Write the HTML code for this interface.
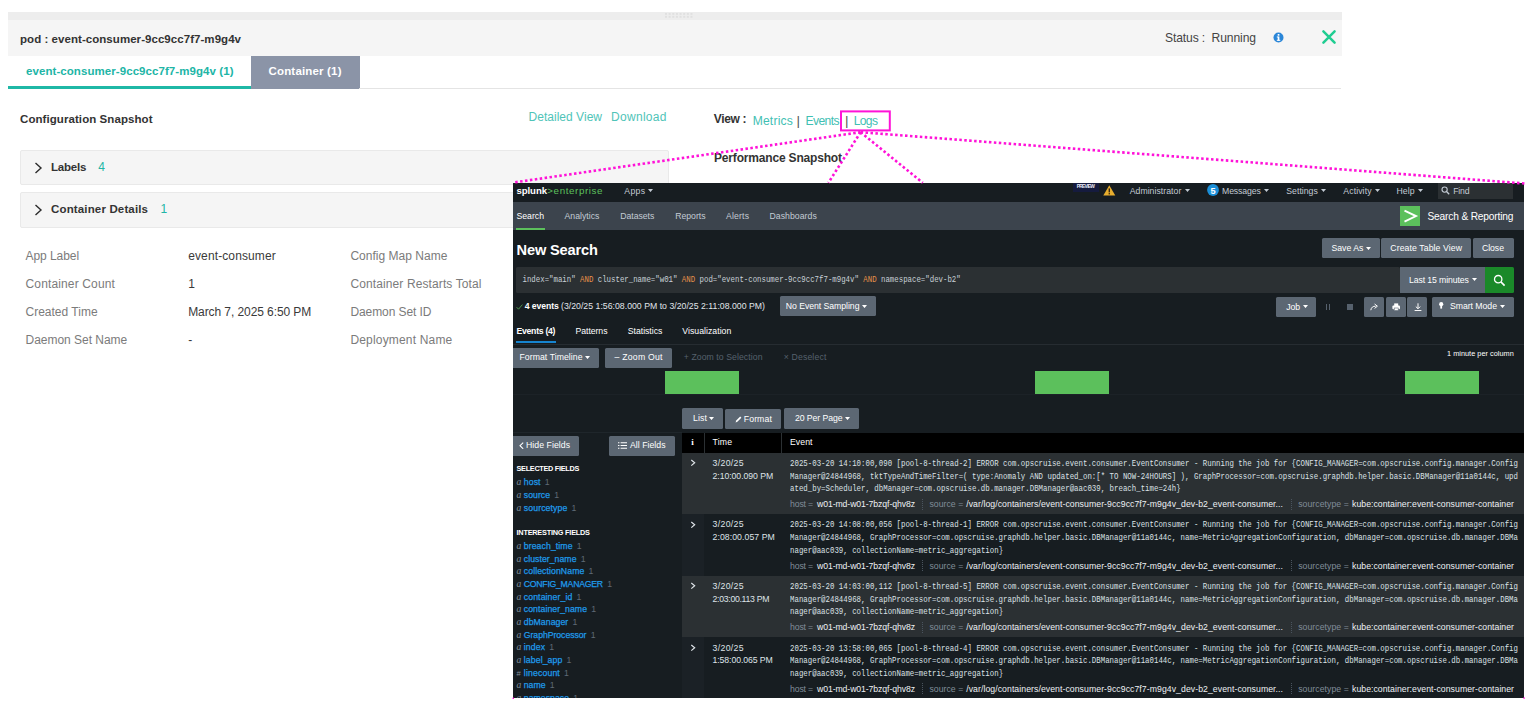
<!DOCTYPE html><html><head><meta charset="utf-8"><title>pod</title><style>

html,body{margin:0;padding:0;background:#fff;}
body{width:1536px;height:709px;position:relative;overflow:hidden;font-family:"Liberation Sans",sans-serif;}
.r{position:absolute;display:block;}
.t{position:absolute;white-space:nowrap;line-height:1;margin:0;padding:0;}
.t b{font-weight:400;color:#e8924a;}

</style></head><body>
<div class="r" style="left:8px;top:12px;width:1333.5px;height:8px;background:#ededed;"></div>
<div class="r" style="left:8px;top:20px;width:1333.5px;height:35.5px;background:#f5f5f5;"></div>
<div class="r" style="left:8px;top:86px;width:242.5px;height:2.5px;background:#1fb8a6;"></div>
<div class="r" style="left:250.5px;top:55.5px;width:109px;height:33px;background:#8b94a7;"></div>
<div class="r" style="left:359px;top:88px;width:982px;height:1px;background:#e4e4e4;"></div>
<div class="r" style="left:20px;top:150px;width:649px;height:35px;background:#f5f5f5;border-radius:2px;border:1px solid #e9e9e9;box-sizing:border-box;"></div>
<div class="r" style="left:20px;top:192px;width:649px;height:36px;background:#f5f5f5;border-radius:2px;border:1px solid #e9e9e9;box-sizing:border-box;"></div>
<div class="r" style="left:513px;top:183px;width:1011px;height:515px;background:#171d21;"></div>
<div class="r" style="left:513px;top:202px;width:1011px;height:28px;background:#3c444d;"></div>
<div class="r" style="left:1072.8px;top:183px;width:26.6px;height:8.7px;background:#151b3e;"></div>
<div class="r" style="left:1438px;top:183px;width:75px;height:15.8px;background:#2b3033;"></div>
<div class="r" style="left:516px;top:228px;width:28.5px;height:2px;background:#5cc05c;"></div>
<div class="r" style="left:1399.5px;top:205.8px;width:20.5px;height:20.3px;background:#5cc05c;"></div>
<div class="r" style="left:1322px;top:237.8px;width:57.5px;height:20.19999999999999px;background:#5c6773;border-radius:1.5px;"></div>
<div class="r" style="left:1381px;top:237.8px;width:90px;height:20.19999999999999px;background:#5c6773;border-radius:1.5px;"></div>
<div class="r" style="left:1472.8px;top:237.8px;width:41.0px;height:20.19999999999999px;background:#5c6773;border-radius:1.5px;"></div>
<div class="r" style="left:516px;top:267.3px;width:884px;height:25.3px;background:#2b3033;border-radius:1.5px;"></div>
<div class="r" style="left:1400px;top:267.3px;width:84.5px;height:25.3px;background:#5c6773;"></div>
<div class="r" style="left:1484.5px;top:267.3px;width:29.3px;height:25.3px;background:#1a8929;border-radius:0 1.5px 1.5px 0;"></div>
<div class="r" style="left:779.5px;top:296px;width:96.5px;height:20px;background:#5c6773;border-radius:1.5px;"></div>
<div class="r" style="left:1276.4px;top:296.5px;width:39.799999999999955px;height:20.100000000000023px;background:#5c6773;border-radius:1.5px;"></div>
<div class="r" style="left:1325.8px;top:304px;width:1.3px;height:5.6px;background:#56616d;"></div>
<div class="r" style="left:1328.7px;top:304px;width:1.3px;height:5.6px;background:#56616d;"></div>
<div class="r" style="left:1347px;top:304px;width:6px;height:5.6px;background:#56616d;"></div>
<div class="r" style="left:1363.9px;top:296.5px;width:20.399999999999864px;height:20.100000000000023px;background:#5c6773;border-radius:1.5px;"></div>
<div class="r" style="left:1385.6px;top:296.5px;width:20.300000000000182px;height:20.100000000000023px;background:#5c6773;border-radius:1.5px;"></div>
<div class="r" style="left:1407.4px;top:296.5px;width:20.09999999999991px;height:20.100000000000023px;background:#5c6773;border-radius:1.5px;"></div>
<div class="r" style="left:1432px;top:296.5px;width:81.79999999999995px;height:20.100000000000023px;background:#5c6773;border-radius:1.5px;"></div>
<div class="r" style="left:516px;top:341.3px;width:39.8px;height:2.1px;background:#1684cf;"></div>
<div class="r" style="left:513px;top:343.6px;width:1011px;height:1px;background:#262c31;"></div>
<div class="r" style="left:513px;top:347.5px;width:85.8px;height:20px;background:#5c6773;border-radius:0 1.5px 1.5px 0;"></div>
<div class="r" style="left:605.2px;top:347.5px;width:66.59999999999991px;height:20.100000000000023px;background:#5c6773;border-radius:1.5px;"></div>
<div class="r" style="left:664.5px;top:371px;width:74.1px;height:22.6px;background:#5cc05c;"></div>
<div class="r" style="left:1034.8px;top:371px;width:74.1px;height:22.6px;background:#5cc05c;"></div>
<div class="r" style="left:1404.8px;top:371px;width:74.1px;height:22.6px;background:#5cc05c;"></div>
<div class="r" style="left:513px;top:393.6px;width:1011px;height:0.8px;background:#1c2227;"></div>
<div class="r" style="left:682px;top:408.4px;width:41px;height:20.200000000000045px;background:#5c6773;border-radius:1.5px;"></div>
<div class="r" style="left:725px;top:409.3px;width:55.799999999999955px;height:20.099999999999966px;background:#5c6773;border-radius:1.5px;"></div>
<div class="r" style="left:783.5px;top:408.4px;width:75.5px;height:20.200000000000045px;background:#5c6773;border-radius:1.5px;"></div>
<div class="r" style="left:682px;top:432.5px;width:842px;height:20.2px;background:#000000;"></div>
<div class="r" style="left:704.3px;top:432.5px;width:0.8px;height:20.2px;background:#2b3033;"></div>
<div class="r" style="left:781.3px;top:432.5px;width:0.8px;height:20.2px;background:#2b3033;"></div>
<div class="r" style="left:513px;top:432.3px;width:169px;height:0.8px;background:#1f262b;"></div>
<div class="r" style="left:513px;top:436px;width:66.3px;height:19.8px;background:#5c6773;border-radius:0 1.5px 1.5px 0;"></div>
<div class="r" style="left:609px;top:436px;width:66px;height:19.80000000000001px;background:#5c6773;border-radius:1.5px;"></div>
<div class="r" style="left:682px;top:452.7px;width:842px;height:61.55000000000001px;background:#2b3033;"></div>
<div class="r" style="left:682px;top:514.25px;width:842px;height:61.549999999999955px;background:#171d21;"></div>
<div class="r" style="left:682px;top:514.25px;width:22.3px;height:61.549999999999955px;background:#1b2126;"></div>
<div class="r" style="left:682px;top:575.8px;width:842px;height:61.55000000000007px;background:#2b3033;"></div>
<div class="r" style="left:682px;top:637.35px;width:842px;height:60.64999999999998px;background:#171d21;"></div>
<div class="r" style="left:682px;top:637.35px;width:22.3px;height:60.64999999999998px;background:#1b2126;"></div>
<svg class="r" style="left:664.5px;top:13.2px" width="30" height="6"><rect x="0.00" y="0.0" width="2" height="1.9" fill="#e0e0e0"/><rect x="0.00" y="2.9" width="2" height="1.9" fill="#e0e0e0"/><rect x="3.64" y="0.0" width="2" height="1.9" fill="#e0e0e0"/><rect x="3.64" y="2.9" width="2" height="1.9" fill="#e0e0e0"/><rect x="7.28" y="0.0" width="2" height="1.9" fill="#e0e0e0"/><rect x="7.28" y="2.9" width="2" height="1.9" fill="#e0e0e0"/><rect x="10.92" y="0.0" width="2" height="1.9" fill="#e0e0e0"/><rect x="10.92" y="2.9" width="2" height="1.9" fill="#e0e0e0"/><rect x="14.56" y="0.0" width="2" height="1.9" fill="#e0e0e0"/><rect x="14.56" y="2.9" width="2" height="1.9" fill="#e0e0e0"/><rect x="18.20" y="0.0" width="2" height="1.9" fill="#e0e0e0"/><rect x="18.20" y="2.9" width="2" height="1.9" fill="#e0e0e0"/><rect x="21.84" y="0.0" width="2" height="1.9" fill="#e0e0e0"/><rect x="21.84" y="2.9" width="2" height="1.9" fill="#e0e0e0"/><rect x="25.48" y="0.0" width="2" height="1.9" fill="#e0e0e0"/><rect x="25.48" y="2.9" width="2" height="1.9" fill="#e0e0e0"/></svg>
<svg class="r" style="left:1273px;top:32.3px" width="11" height="11" viewBox="0 0 11 11"><circle cx="5.5" cy="5.5" r="5" fill="#2a86d8"/><rect x="4.7" y="2" width="1.7" height="1.7" fill="#fff"/><rect x="4.7" y="4.5" width="1.7" height="4.2" fill="#fff"/><rect x="3.8" y="4.5" width="1.5" height="1" fill="#fff"/><rect x="3.8" y="7.8" width="3.5" height="1" fill="#fff"/></svg>
<svg class="r" style="left:1321px;top:29px" width="16" height="16" viewBox="0 0 16 16"><path d="M2.4 2.4 L13.6 13.6 M13.6 2.4 L2.4 13.6" stroke="#1fcd91" stroke-width="2.5" stroke-linecap="round" fill="none"/></svg>
<svg class="r" style="left:33px;top:160.5px" width="12" height="14" viewBox="0 0 12 14"><path d="M2.5 2 L8 7 L2.5 12" stroke="#2b2b2b" stroke-width="1.4" fill="none"/></svg>
<svg class="r" style="left:33px;top:202.5px" width="12" height="14" viewBox="0 0 12 14"><path d="M2.5 2 L8 7 L2.5 12" stroke="#2b2b2b" stroke-width="1.4" fill="none"/></svg>
<svg class="r" style="left:647.6px;top:189.3px" width="5" height="3.2" viewBox="0 0 10 6"><path d="M0 0 L10 0 L5 6 Z" fill="#c3cbd4"/></svg>
<svg class="r" style="left:1103px;top:185.4px" width="12.6" height="10.8" viewBox="0 0 12.6 10.8"><path d="M6.3 0.3 L12.3 10.4 L0.3 10.4 Z" fill="#e8ae2e"/><rect x="5.6" y="3.4" width="1.4" height="4" fill="#3a2a10"/><rect x="5.6" y="8.1" width="1.4" height="1.3" fill="#3a2a10"/></svg>
<svg class="r" style="left:1185px;top:189.4px" width="5" height="3.2" viewBox="0 0 10 6"><path d="M0 0 L10 0 L5 6 Z" fill="#c3cbd4"/></svg>
<svg class="r" style="left:1207px;top:184.3px" width="12" height="12" viewBox="0 0 12 12"><circle cx="6" cy="6" r="5.9" fill="#1a8fd8"/></svg>
<svg class="r" style="left:1264px;top:189.4px" width="5" height="3.2" viewBox="0 0 10 6"><path d="M0 0 L10 0 L5 6 Z" fill="#c3cbd4"/></svg>
<svg class="r" style="left:1321.3px;top:189.4px" width="5" height="3.2" viewBox="0 0 10 6"><path d="M0 0 L10 0 L5 6 Z" fill="#c3cbd4"/></svg>
<svg class="r" style="left:1374.5px;top:189.4px" width="5" height="3.2" viewBox="0 0 10 6"><path d="M0 0 L10 0 L5 6 Z" fill="#c3cbd4"/></svg>
<svg class="r" style="left:1417.8px;top:189.4px" width="5" height="3.2" viewBox="0 0 10 6"><path d="M0 0 L10 0 L5 6 Z" fill="#c3cbd4"/></svg>
<svg class="r" style="left:1441px;top:186.3px" width="9" height="9" viewBox="0 0 9 9"><circle cx="3.6" cy="3.6" r="2.6" stroke="#c3cbd4" stroke-width="1.1" fill="none"/><path d="M5.5 5.5 L8.2 8.2" stroke="#c3cbd4" stroke-width="1.3"/></svg>
<svg class="r" style="left:1399.5px;top:205.8px" width="20.5" height="20.3" viewBox="0 0 20.5 20.3"><path d="M4.5 4.6 L16 10.1 L4.5 15.7" stroke="#fff" stroke-width="1.9" fill="none"/></svg>
<svg class="r" style="left:1366.2px;top:246.6px" width="5" height="3.2" viewBox="0 0 10 6"><path d="M0 0 L10 0 L5 6 Z" fill="#ffffff"/></svg>
<svg class="r" style="left:1471.5px;top:278.4px" width="5" height="3.2" viewBox="0 0 10 6"><path d="M0 0 L10 0 L5 6 Z" fill="#ffffff"/></svg>
<svg class="r" style="left:1492.5px;top:274px" width="13" height="13" viewBox="0 0 13 13"><circle cx="5.2" cy="5.2" r="3.7" stroke="#fff" stroke-width="1.3" fill="none"/><path d="M7.9 7.9 L11.6 11.6" stroke="#fff" stroke-width="1.6"/></svg>
<svg class="r" style="left:516.3px;top:303.5px" width="7" height="6" viewBox="0 0 7 6"><path d="M0.6 3.2 L2.5 5.2 L6.4 0.6" stroke="#53a051" stroke-width="0.9" fill="none"/></svg>
<svg class="r" style="left:862.3px;top:304.6px" width="5" height="3.2" viewBox="0 0 10 6"><path d="M0 0 L10 0 L5 6 Z" fill="#ffffff"/></svg>
<svg class="r" style="left:1303.2px;top:305.3px" width="5" height="3.2" viewBox="0 0 10 6"><path d="M0 0 L10 0 L5 6 Z" fill="#ffffff"/></svg>
<svg class="r" style="left:1370px;top:302.5px" width="8" height="8" viewBox="0 0 8 8"><path d="M0.8 7.2 C1.2 4.3 3 3.2 5.6 3.2" stroke="#fff" stroke-width="1" fill="none"/><path d="M4.6 1 L7.4 3.2 L4.6 5.4" stroke="#fff" stroke-width="1" fill="none"/></svg>
<svg class="r" style="left:1391.6px;top:302.6px" width="8.4" height="8" viewBox="0 0 8.4 8"><rect x="2.2" y="0.4" width="4" height="2.6" fill="#fff"/><rect x="0.4" y="2.6" width="7.6" height="3.6" rx="1" fill="#fff"/><rect x="2.2" y="5" width="4" height="2.6" fill="#fff" stroke="#5c6773" stroke-width="0.6"/></svg>
<svg class="r" style="left:1413.6px;top:302.6px" width="8" height="8.4" viewBox="0 0 8 8.4"><path d="M4 0.3 L4 5.4 M1.8 3.6 L4 5.8 L6.2 3.6" stroke="#fff" stroke-width="1" fill="none"/><path d="M0.6 7.6 L7.4 7.6" stroke="#fff" stroke-width="1.1"/></svg>
<svg class="r" style="left:1439.3px;top:302.3px" width="4.4" height="7.4" viewBox="0 0 4.4 7.4"><circle cx="2.2" cy="2.2" r="2.1" fill="#fff"/><rect x="1.3" y="4" width="1.8" height="2.6" fill="#fff"/></svg>
<svg class="r" style="left:1500.2px;top:304.6px" width="5" height="3.2" viewBox="0 0 10 6"><path d="M0 0 L10 0 L5 6 Z" fill="#ffffff"/></svg>
<svg class="r" style="left:585.2px;top:355.8px" width="5" height="3.2" viewBox="0 0 10 6"><path d="M0 0 L10 0 L5 6 Z" fill="#ffffff"/></svg>
<svg class="r" style="left:709.3px;top:417.1px" width="5" height="3.2" viewBox="0 0 10 6"><path d="M0 0 L10 0 L5 6 Z" fill="#ffffff"/></svg>
<svg class="r" style="left:734.5px;top:415.6px" width="7" height="7" viewBox="0 0 7 7"><path d="M0.6 6.4 L1.2 4.6 L5.2 0.6 L6.4 1.8 L2.4 5.8 Z" fill="#fff"/></svg>
<svg class="r" style="left:845.3px;top:417.1px" width="5" height="3.2" viewBox="0 0 10 6"><path d="M0 0 L10 0 L5 6 Z" fill="#ffffff"/></svg>
<svg class="r" style="left:519.3px;top:441.6px" width="5" height="7.4" viewBox="0 0 5 7.4"><path d="M4.2 0.6 L1 3.7 L4.2 6.8" stroke="#fff" stroke-width="1.1" fill="none"/></svg>
<svg class="r" style="left:618.3px;top:442px" width="9" height="7" viewBox="0 0 9 7"><path d="M0 0.8 H1.4 M2.6 0.8 H9 M0 3.5 H1.4 M2.6 3.5 H9 M0 6.2 H1.4 M2.6 6.2 H9" stroke="#fff" stroke-width="1.1"/></svg>
<svg class="r" style="left:690px;top:459.3px" width="6.4" height="7.6" viewBox="0 0 6.4 7.6"><path d="M1.3 1 L4.7 3.8 L1.3 6.6" stroke="#e1e6eb" stroke-width="1.15" fill="none"/></svg>
<div class="r" style="left:922.3px;top:498.5px;width:0;height:11px;border-left:0.8px dotted #4a545e;"></div>
<div class="r" style="left:1291px;top:498.5px;width:0;height:11px;border-left:0.8px dotted #4a545e;"></div>
<svg class="r" style="left:690px;top:520.85px" width="6.4" height="7.6" viewBox="0 0 6.4 7.6"><path d="M1.3 1 L4.7 3.8 L1.3 6.6" stroke="#e1e6eb" stroke-width="1.15" fill="none"/></svg>
<div class="r" style="left:922.3px;top:560.05px;width:0;height:11px;border-left:0.8px dotted #4a545e;"></div>
<div class="r" style="left:1291px;top:560.05px;width:0;height:11px;border-left:0.8px dotted #4a545e;"></div>
<svg class="r" style="left:690px;top:582.4px" width="6.4" height="7.6" viewBox="0 0 6.4 7.6"><path d="M1.3 1 L4.7 3.8 L1.3 6.6" stroke="#e1e6eb" stroke-width="1.15" fill="none"/></svg>
<div class="r" style="left:922.3px;top:621.5999999999999px;width:0;height:11px;border-left:0.8px dotted #4a545e;"></div>
<div class="r" style="left:1291px;top:621.5999999999999px;width:0;height:11px;border-left:0.8px dotted #4a545e;"></div>
<svg class="r" style="left:690px;top:643.95px" width="6.4" height="7.6" viewBox="0 0 6.4 7.6"><path d="M1.3 1 L4.7 3.8 L1.3 6.6" stroke="#e1e6eb" stroke-width="1.15" fill="none"/></svg>
<div class="r" style="left:922.3px;top:683.15px;width:0;height:11px;border-left:0.8px dotted #4a545e;"></div>
<div class="r" style="left:1291px;top:683.15px;width:0;height:11px;border-left:0.8px dotted #4a545e;"></div>
<div class="r" style="left:513px;top:698px;width:1011px;height:11px;background:#fff;z-index:5"></div>
<svg class="r" style="left:0;top:0;z-index:6" width="1536" height="709"><g stroke="#ff12d8" stroke-width="2.6" stroke-dasharray="2.5 2.45" fill="none"><path d="M860.6 132.2 L513.6 182.5"/><path d="M860.6 132.2 L828.4 182.8"/><path d="M860.6 132.2 L922.8 182.8"/><path d="M860.6 132.2 L1524.6 183.5"/></g><rect x="841" y="111.4" width="48.8" height="19" fill="none" stroke="#ff12d8" stroke-width="2"/><rect x="512.6" y="697.6" width="1.4" height="1.4" fill="#ff12d8"/><rect x="1523.4" y="697.4" width="1.4" height="1.4" fill="#ff12d8"/></svg>
<div class="t" id="t0" style="left:20.00px;top:34.00px;font-size:11.5px;color:#333333;font-weight:700;letter-spacing:0.051px;">pod : event-consumer-9cc9cc7f7-m9g4v</div>
<div class="t" id="t1" style="left:1165.00px;top:32.01px;font-size:12.1px;color:#444444;letter-spacing:-0.111px;white-space:pre;">Status :  Running</div>
<div class="t" id="t2" style="left:26.00px;top:66.00px;font-size:11.5px;color:#21b5a6;font-weight:700;letter-spacing:0.070px;">event-consumer-9cc9cc7f7-m9g4v (1)</div>
<div class="t" id="t3" style="left:268.50px;top:66.00px;font-size:11.5px;color:#ffffff;font-weight:700;letter-spacing:0.173px;">Container (1)</div>
<div class="t" id="t4" style="left:20.00px;top:114.00px;font-size:11.5px;color:#333333;font-weight:700;letter-spacing:0.073px;">Configuration Snapshot</div>
<div class="t" id="t5" style="left:528.50px;top:111.01px;font-size:12px;color:#4fc4b8;letter-spacing:0.029px;">Detailed View</div>
<div class="t" id="t6" style="left:611.00px;top:111.01px;font-size:12px;color:#4fc4b8;letter-spacing:0.304px;">Download</div>
<div class="t" id="t7" style="left:713.70px;top:113.01px;font-size:12px;color:#333333;font-weight:700;letter-spacing:-0.334px;">View :</div>
<div class="t" id="t8" style="left:752.70px;top:115.01px;font-size:12.1px;color:#3fc0b3;letter-spacing:0.189px;">Metrics</div>
<div class="t" id="t9" style="left:796.60px;top:114.02px;font-size:13.5px;color:#555555;">|</div>
<div class="t" id="t10" style="left:805.50px;top:115.01px;font-size:12.1px;color:#3fc0b3;letter-spacing:-0.577px;">Events</div>
<div class="t" id="t11" style="left:844.90px;top:114.02px;font-size:13.5px;color:#555555;">|</div>
<div class="t" id="t12" style="left:853.70px;top:115.01px;font-size:12.1px;color:#3fc0b3;letter-spacing:-0.645px;">Logs</div>
<div class="t" id="t13" style="left:714.00px;top:152.02px;font-size:12px;color:#333333;font-weight:700;letter-spacing:-0.178px;">Performance Snapshot</div>
<div class="t" id="t14" style="left:51.00px;top:162.00px;font-size:11.5px;color:#333333;font-weight:700;letter-spacing:-0.228px;">Labels</div>
<div class="t" id="t15" style="left:98.30px;top:161.02px;font-size:12px;color:#21b5a6;">4</div>
<div class="t" id="t16" style="left:51.00px;top:204.00px;font-size:11.5px;color:#333333;font-weight:700;letter-spacing:0.151px;">Container Details</div>
<div class="t" id="t17" style="left:160.50px;top:203.02px;font-size:12px;color:#21b5a6;">1</div>
<div class="t" id="t18" style="left:25.50px;top:250.01px;font-size:12px;color:#7b7b7b;letter-spacing:-0.056px;">App Label</div>
<div class="t" id="t19" style="left:188.20px;top:250.01px;font-size:12px;color:#3a3a3a;letter-spacing:0.119px;">event-consumer</div>
<div class="t" id="t20" style="left:350.40px;top:250.01px;font-size:12px;color:#7b7b7b;letter-spacing:0.020px;">Config Map Name</div>
<div class="t" id="t21" style="left:25.50px;top:278.00px;font-size:12px;color:#7b7b7b;letter-spacing:0.144px;">Container Count</div>
<div class="t" id="t22" style="left:188.20px;top:278.00px;font-size:12px;color:#3a3a3a;">1</div>
<div class="t" id="t23" style="left:350.40px;top:278.00px;font-size:12px;color:#7b7b7b;letter-spacing:0.112px;">Container Restarts Total</div>
<div class="t" id="t24" style="left:25.50px;top:306.01px;font-size:12px;color:#7b7b7b;letter-spacing:0.006px;">Created Time</div>
<div class="t" id="t25" style="left:188.20px;top:306.01px;font-size:12px;color:#3a3a3a;letter-spacing:-0.082px;">March 7, 2025 6:50 PM</div>
<div class="t" id="t26" style="left:350.40px;top:306.01px;font-size:12px;color:#7b7b7b;letter-spacing:-0.079px;">Daemon Set ID</div>
<div class="t" id="t27" style="left:25.50px;top:334.00px;font-size:12px;color:#7b7b7b;letter-spacing:-0.025px;">Daemon Set Name</div>
<div class="t" id="t28" style="left:188.20px;top:334.00px;font-size:12px;color:#3a3a3a;">-</div>
<div class="t" id="t29" style="left:350.40px;top:334.00px;font-size:12px;color:#7b7b7b;letter-spacing:0.180px;">Deployment Name</div>
<div class="t" id="t30" style="left:516.50px;top:186.02px;font-size:9.6px;color:#ffffff;font-weight:700;letter-spacing:-0.084px;">splunk</div>
<div class="t" id="t31" style="left:547.30px;top:186.02px;font-size:9.6px;color:#5cc05c;">&gt;</div>
<div class="t" id="t32" style="left:553.60px;top:186.00px;font-size:9.8px;color:#5cc05c;letter-spacing:0.591px;">enterprise</div>
<div class="t" id="t33" style="left:624.30px;top:187.01px;font-size:8.7px;color:#c3cbd4;letter-spacing:0.296px;">Apps</div>
<div class="t" id="t34" style="left:1076.70px;top:185.01px;font-size:4.9px;color:#e8ebf5;font-weight:700;letter-spacing:-0.710px;">PREVIEW</div>
<div class="t" id="t35" style="left:1129.70px;top:187.00px;font-size:8.7px;color:#c3cbd4;letter-spacing:0.034px;">Administrator</div>
<div class="t" id="t36" style="left:1210.40px;top:187.01px;font-size:9.2px;color:#ffffff;font-weight:700;">5</div>
<div class="t" id="t37" style="left:1222.00px;top:187.00px;font-size:8.7px;color:#c3cbd4;letter-spacing:-0.101px;">Messages</div>
<div class="t" id="t38" style="left:1286.30px;top:187.00px;font-size:8.7px;color:#c3cbd4;letter-spacing:0.016px;">Settings</div>
<div class="t" id="t39" style="left:1343.30px;top:187.00px;font-size:8.7px;color:#c3cbd4;letter-spacing:0.098px;">Activity</div>
<div class="t" id="t40" style="left:1396.50px;top:187.00px;font-size:8.7px;color:#c3cbd4;letter-spacing:0.042px;">Help</div>
<div class="t" id="t41" style="left:1453.20px;top:187.00px;font-size:8.7px;color:#c3cbd4;letter-spacing:-0.202px;">Find</div>
<div class="t" id="t42" style="left:516.50px;top:212.00px;font-size:8.7px;color:#ffffff;letter-spacing:-0.006px;">Search</div>
<div class="t" id="t43" style="left:564.50px;top:212.00px;font-size:8.7px;color:#c3cbd4;letter-spacing:0.017px;">Analytics</div>
<div class="t" id="t44" style="left:620.30px;top:212.00px;font-size:8.7px;color:#c3cbd4;letter-spacing:-0.042px;">Datasets</div>
<div class="t" id="t45" style="left:675.30px;top:212.00px;font-size:8.7px;color:#c3cbd4;letter-spacing:-0.037px;">Reports</div>
<div class="t" id="t46" style="left:726.00px;top:212.00px;font-size:8.7px;color:#c3cbd4;letter-spacing:0.156px;">Alerts</div>
<div class="t" id="t47" style="left:769.50px;top:212.00px;font-size:8.7px;color:#c3cbd4;letter-spacing:0.049px;">Dashboards</div>
<div class="t" id="t48" style="left:1427.50px;top:212.01px;font-size:10.2px;color:#ffffff;letter-spacing:-0.172px;">Search &amp; Reporting</div>
<div class="t" id="t49" style="left:516.50px;top:243.02px;font-size:14.6px;color:#ffffff;font-weight:700;letter-spacing:-0.139px;">New Search</div>
<div class="t" id="t50" style="left:1331.50px;top:244.00px;font-size:8.7px;color:#ffffff;letter-spacing:-0.013px;">Save As</div>
<div class="t" id="t51" style="left:1390.30px;top:244.00px;font-size:8.7px;color:#ffffff;letter-spacing:0.095px;">Create Table View</div>
<div class="t" id="t52" style="left:1482.00px;top:244.00px;font-size:8.7px;color:#ffffff;letter-spacing:-0.055px;">Close</div>
<div class="t" id="t53" style="left:522.50px;top:277.04px;font-size:7.38px;color:#c9d0d7;font-family:'Liberation Mono', monospace;transform:scaleY(1.18);transform-origin:0 4.96px;">index="main" <b>AND</b> cluster_name="w01" <b>AND</b> pod="event-consumer-9cc9cc7f7-m9g4v" <b>AND</b> namespace="dev-b2"</div>
<div class="t" id="t54" style="left:1409.00px;top:276.00px;font-size:8.7px;color:#ffffff;letter-spacing:-0.110px;">Last 15 minutes</div>
<div class="t" id="t55" style="left:524.80px;top:302.00px;font-size:8.7px;color:#ffffff;font-weight:700;letter-spacing:-0.112px;">4 events</div>
<div class="t" id="t56" style="left:561.00px;top:302.00px;font-size:8.7px;color:#e1e6eb;letter-spacing:0.026px;">(3/20/25 1:56:08.000 PM to 3/20/25 2:11:08.000 PM)</div>
<div class="t" id="t57" style="left:785.80px;top:302.00px;font-size:8.7px;color:#ffffff;letter-spacing:-0.042px;">No Event Sampling</div>
<div class="t" id="t58" style="left:1286.30px;top:303.01px;font-size:8.7px;color:#ffffff;letter-spacing:-0.158px;">Job</div>
<div class="t" id="t59" style="left:1450.00px;top:302.00px;font-size:8.7px;color:#ffffff;letter-spacing:-0.036px;">Smart Mode</div>
<div class="t" id="t60" style="left:516.50px;top:327.01px;font-size:8.7px;color:#ffffff;font-weight:700;letter-spacing:-0.281px;">Events (4)</div>
<div class="t" id="t61" style="left:575.50px;top:327.01px;font-size:8.7px;color:#ffffff;letter-spacing:-0.051px;">Patterns</div>
<div class="t" id="t62" style="left:627.80px;top:327.01px;font-size:8.7px;color:#ffffff;letter-spacing:-0.030px;">Statistics</div>
<div class="t" id="t63" style="left:682.30px;top:327.01px;font-size:8.7px;color:#ffffff;letter-spacing:0.031px;">Visualization</div>
<div class="t" id="t64" style="left:519.50px;top:353.01px;font-size:8.7px;color:#ffffff;letter-spacing:0.051px;">Format Timeline</div>
<div class="t" id="t65" style="left:614.50px;top:353.01px;font-size:8.7px;color:#ffffff;letter-spacing:0.236px;">– Zoom Out</div>
<div class="t" id="t66" style="left:683.80px;top:353.01px;font-size:8.7px;color:#56616d;letter-spacing:0.066px;">+ Zoom to Selection</div>
<div class="t" id="t67" style="left:783.80px;top:353.01px;font-size:8.7px;color:#56616d;letter-spacing:0.134px;">× Deselect</div>
<div class="t" id="t68" style="left:1447.00px;top:350.01px;font-size:7.3px;color:#ffffff;letter-spacing:0.037px;">1 minute per column</div>
<div class="t" id="t69" style="left:693.00px;top:414.00px;font-size:8.7px;color:#ffffff;letter-spacing:0.156px;">List</div>
<div class="t" id="t70" style="left:743.80px;top:415.01px;font-size:8.7px;color:#ffffff;letter-spacing:0.097px;">Format</div>
<div class="t" id="t71" style="left:795.00px;top:414.00px;font-size:8.7px;color:#ffffff;letter-spacing:-0.081px;">20 Per Page</div>
<div class="t" id="t72" style="left:691.30px;top:438.02px;font-size:9px;color:#ffffff;font-weight:700;font-family:'Liberation Serif', serif;">i</div>
<div class="t" id="t73" style="left:712.50px;top:438.01px;font-size:8.7px;color:#ffffff;letter-spacing:0.172px;">Time</div>
<div class="t" id="t74" style="left:790.00px;top:438.01px;font-size:8.7px;color:#ffffff;letter-spacing:0.070px;">Event</div>
<div class="t" id="t75" style="left:526.00px;top:441.01px;font-size:8.7px;color:#ffffff;letter-spacing:0.053px;">Hide Fields</div>
<div class="t" id="t76" style="left:630.00px;top:441.01px;font-size:8.7px;color:#ffffff;letter-spacing:0.028px;">All Fields</div>
<div class="t" id="t77" style="left:516.50px;top:465.01px;font-size:7.3px;color:#ffffff;font-weight:700;letter-spacing:-0.293px;">SELECTED FIELDS</div>
<div class="t" id="t78" style="left:516.50px;top:529.01px;font-size:7.3px;color:#ffffff;font-weight:700;letter-spacing:-0.208px;">INTERESTING FIELDS</div>
<div class="t" id="t79" style="left:516.40px;top:477.01px;font-size:9.6px;color:#818d99;font-family:'Liberation Serif', serif;font-style:italic;">a</div>
<div class="t" id="t80" style="left:523.80px;top:478.00px;font-size:8.7px;color:#1f9bea;letter-spacing:0.093px;-webkit-text-stroke:0.25px #1f9bea;">host</div>
<div class="t" id="t81" style="left:544.80px;top:478.00px;font-size:8.7px;color:#5f6a76;">1</div>
<div class="t" id="t82" style="left:516.40px;top:490.01px;font-size:9.6px;color:#818d99;font-family:'Liberation Serif', serif;font-style:italic;">a</div>
<div class="t" id="t83" style="left:523.80px;top:491.00px;font-size:8.7px;color:#1f9bea;letter-spacing:0.024px;-webkit-text-stroke:0.25px #1f9bea;">source</div>
<div class="t" id="t84" style="left:554.30px;top:491.00px;font-size:8.7px;color:#5f6a76;">1</div>
<div class="t" id="t85" style="left:516.40px;top:503.01px;font-size:9.6px;color:#818d99;font-family:'Liberation Serif', serif;font-style:italic;">a</div>
<div class="t" id="t86" style="left:523.80px;top:504.00px;font-size:8.7px;color:#1f9bea;letter-spacing:0.111px;-webkit-text-stroke:0.25px #1f9bea;">sourcetype</div>
<div class="t" id="t87" style="left:571.60px;top:504.00px;font-size:8.7px;color:#5f6a76;">1</div>
<div class="t" id="t88" style="left:516.40px;top:541.01px;font-size:9.6px;color:#818d99;font-family:'Liberation Serif', serif;font-style:italic;">a</div>
<div class="t" id="t89" style="left:523.80px;top:542.00px;font-size:8.7px;color:#1f9bea;letter-spacing:0.089px;-webkit-text-stroke:0.25px #1f9bea;">breach_time</div>
<div class="t" id="t90" style="left:576.80px;top:542.00px;font-size:8.7px;color:#5f6a76;">1</div>
<div class="t" id="t91" style="left:516.40px;top:554.02px;font-size:9.6px;color:#818d99;font-family:'Liberation Serif', serif;font-style:italic;">a</div>
<div class="t" id="t92" style="left:523.80px;top:555.01px;font-size:8.7px;color:#1f9bea;letter-spacing:0.049px;-webkit-text-stroke:0.25px #1f9bea;">cluster_name</div>
<div class="t" id="t93" style="left:580.80px;top:555.01px;font-size:8.7px;color:#5f6a76;">1</div>
<div class="t" id="t94" style="left:516.40px;top:566.02px;font-size:9.6px;color:#818d99;font-family:'Liberation Serif', serif;font-style:italic;">a</div>
<div class="t" id="t95" style="left:523.80px;top:567.01px;font-size:8.7px;color:#1f9bea;letter-spacing:0.084px;-webkit-text-stroke:0.25px #1f9bea;">collectionName</div>
<div class="t" id="t96" style="left:588.60px;top:567.01px;font-size:8.7px;color:#5f6a76;">1</div>
<div class="t" id="t97" style="left:516.40px;top:579.01px;font-size:9.6px;color:#818d99;font-family:'Liberation Serif', serif;font-style:italic;">a</div>
<div class="t" id="t98" style="left:523.80px;top:580.00px;font-size:8.7px;color:#1f9bea;letter-spacing:-0.257px;-webkit-text-stroke:0.25px #1f9bea;">CONFIG_MANAGER</div>
<div class="t" id="t99" style="left:607.30px;top:580.00px;font-size:8.7px;color:#5f6a76;">1</div>
<div class="t" id="t100" style="left:516.40px;top:592.01px;font-size:9.6px;color:#818d99;font-family:'Liberation Serif', serif;font-style:italic;">a</div>
<div class="t" id="t101" style="left:523.80px;top:593.00px;font-size:8.7px;color:#1f9bea;letter-spacing:0.105px;-webkit-text-stroke:0.25px #1f9bea;">container_id</div>
<div class="t" id="t102" style="left:576.60px;top:593.00px;font-size:8.7px;color:#5f6a76;">1</div>
<div class="t" id="t103" style="left:516.40px;top:604.01px;font-size:9.6px;color:#818d99;font-family:'Liberation Serif', serif;font-style:italic;">a</div>
<div class="t" id="t104" style="left:523.80px;top:605.00px;font-size:8.7px;color:#1f9bea;letter-spacing:0.068px;-webkit-text-stroke:0.25px #1f9bea;">container_name</div>
<div class="t" id="t105" style="left:591.30px;top:605.00px;font-size:8.7px;color:#5f6a76;">1</div>
<div class="t" id="t106" style="left:516.40px;top:617.01px;font-size:9.6px;color:#818d99;font-family:'Liberation Serif', serif;font-style:italic;">a</div>
<div class="t" id="t107" style="left:523.80px;top:618.00px;font-size:8.7px;color:#1f9bea;letter-spacing:0.056px;-webkit-text-stroke:0.25px #1f9bea;">dbManager</div>
<div class="t" id="t108" style="left:572.50px;top:618.00px;font-size:8.7px;color:#5f6a76;">1</div>
<div class="t" id="t109" style="left:516.40px;top:630.01px;font-size:9.6px;color:#818d99;font-family:'Liberation Serif', serif;font-style:italic;">a</div>
<div class="t" id="t110" style="left:523.80px;top:631.00px;font-size:8.7px;color:#1f9bea;letter-spacing:-0.044px;-webkit-text-stroke:0.25px #1f9bea;">GraphProcessor</div>
<div class="t" id="t111" style="left:590.80px;top:631.00px;font-size:8.7px;color:#5f6a76;">1</div>
<div class="t" id="t112" style="left:516.40px;top:642.01px;font-size:9.6px;color:#818d99;font-family:'Liberation Serif', serif;font-style:italic;">a</div>
<div class="t" id="t113" style="left:523.80px;top:643.00px;font-size:8.7px;color:#1f9bea;letter-spacing:0.105px;-webkit-text-stroke:0.25px #1f9bea;">index</div>
<div class="t" id="t114" style="left:549.30px;top:643.00px;font-size:8.7px;color:#5f6a76;">1</div>
<div class="t" id="t115" style="left:516.40px;top:655.00px;font-size:9.6px;color:#818d99;font-family:'Liberation Serif', serif;font-style:italic;">a</div>
<div class="t" id="t116" style="left:523.80px;top:656.01px;font-size:8.7px;color:#1f9bea;letter-spacing:0.102px;-webkit-text-stroke:0.25px #1f9bea;">label_app</div>
<div class="t" id="t117" style="left:566.60px;top:656.01px;font-size:8.7px;color:#5f6a76;">1</div>
<div class="t" id="t118" style="left:516.40px;top:670.00px;font-size:7.6px;color:#818d99;">#</div>
<div class="t" id="t119" style="left:523.80px;top:669.01px;font-size:8.7px;color:#1f9bea;letter-spacing:0.152px;-webkit-text-stroke:0.25px #1f9bea;">linecount</div>
<div class="t" id="t120" style="left:564.10px;top:669.01px;font-size:8.7px;color:#5f6a76;">1</div>
<div class="t" id="t121" style="left:516.40px;top:680.01px;font-size:9.6px;color:#818d99;font-family:'Liberation Serif', serif;font-style:italic;">a</div>
<div class="t" id="t122" style="left:523.80px;top:681.00px;font-size:8.7px;color:#1f9bea;letter-spacing:-0.011px;-webkit-text-stroke:0.25px #1f9bea;">name</div>
<div class="t" id="t123" style="left:549.80px;top:681.00px;font-size:8.7px;color:#5f6a76;">1</div>
<div class="t" id="t124" style="left:516.40px;top:693.01px;font-size:9.6px;color:#818d99;font-family:'Liberation Serif', serif;font-style:italic;">a</div>
<div class="t" id="t125" style="left:523.80px;top:694.00px;font-size:8.7px;color:#1f9bea;letter-spacing:0.035px;-webkit-text-stroke:0.25px #1f9bea;">namespace</div>
<div class="t" id="t126" style="left:573.30px;top:694.00px;font-size:8.7px;color:#5f6a76;">1</div>
<div class="t" id="t127" style="left:712.50px;top:459.00px;font-size:8.7px;color:#dfe4e9;letter-spacing:0.350px;">3/20/25</div>
<div class="t" id="t128" style="left:712.50px;top:472.01px;font-size:8.7px;color:#dfe4e9;letter-spacing:-0.050px;">2:10:00.090 PM</div>
<div class="t" id="t129" style="left:790.00px;top:461.16px;font-size:7.38px;color:#dde2e7;font-family:'Liberation Mono', monospace;letter-spacing:0.013px;transform:scaleY(1.2);transform-origin:0 4.84px;">2025-03-20 14:10:00,090 [pool-8-thread-2] ERROR com.opscruise.event.consumer.EventConsumer - Running the job for {CONFIG_MANAGER=com.opscruise.config.manager.Config</div>
<div class="t" id="t130" style="left:790.00px;top:474.19px;font-size:7.38px;color:#dde2e7;font-family:'Liberation Mono', monospace;letter-spacing:0.013px;transform:scaleY(1.2);transform-origin:0 4.81px;">Manager@24844968, tktTypeAndTimeFilter=( type:Anomaly AND updated_on:[* TO NOW-24HOURS] ), GraphProcessor=com.opscruise.graphdb.helper.basic.DBManager@11a0144c, upd</div>
<div class="t" id="t131" style="left:790.00px;top:486.09px;font-size:7.38px;color:#dde2e7;font-family:'Liberation Mono', monospace;letter-spacing:0.013px;transform:scaleY(1.2);transform-origin:0 4.91px;">ated_by=Scheduler, dbManager=com.opscruise.db.manager.DBManager@aac039, breach_time=24h}</div>
<div class="t" id="t132" style="left:790.00px;top:500.01px;font-size:8.7px;color:#818d99;letter-spacing:-0.144px;">host =</div>
<div class="t" id="t133" style="left:817.00px;top:500.01px;font-size:8.7px;color:#eef1f4;letter-spacing:-0.093px;">w01-md-w01-7bzqf-qhv8z</div>
<div class="t" id="t134" style="left:929.50px;top:500.01px;font-size:8.7px;color:#818d99;letter-spacing:0.020px;">source =</div>
<div class="t" id="t135" style="left:966.20px;top:500.01px;font-size:8.7px;color:#eef1f4;letter-spacing:0.065px;">/var/log/containers/event-consumer-9cc9cc7f7-m9g4v_dev-b2_event-consumer...</div>
<div class="t" id="t136" style="left:1298.20px;top:500.01px;font-size:8.7px;color:#818d99;letter-spacing:0.056px;">sourcetype =</div>
<div class="t" id="t137" style="left:1352.00px;top:500.01px;font-size:8.7px;color:#eef1f4;letter-spacing:0.044px;">kube:container:event-consumer-container</div>
<div class="t" id="t138" style="left:712.50px;top:520.01px;font-size:8.7px;color:#dfe4e9;letter-spacing:0.350px;">3/20/25</div>
<div class="t" id="t139" style="left:712.50px;top:533.01px;font-size:8.7px;color:#dfe4e9;letter-spacing:0.074px;">2:08:00.057 PM</div>
<div class="t" id="t140" style="left:790.00px;top:522.05px;font-size:7.38px;color:#dde2e7;font-family:'Liberation Mono', monospace;letter-spacing:0.013px;transform:scaleY(1.2);transform-origin:0 4.95px;">2025-03-20 14:08:00,056 [pool-8-thread-1] ERROR com.opscruise.event.consumer.EventConsumer - Running the job for {CONFIG_MANAGER=com.opscruise.config.manager.Config</div>
<div class="t" id="t141" style="left:790.00px;top:535.07px;font-size:7.38px;color:#dde2e7;font-family:'Liberation Mono', monospace;letter-spacing:0.013px;transform:scaleY(1.2);transform-origin:0 4.93px;">Manager@24844968, GraphProcessor=com.opscruise.graphdb.helper.basic.DBManager@11a0144c, name=MetricAggregationConfiguration, dbManager=com.opscruise.db.manager.DBMa</div>
<div class="t" id="t142" style="left:790.00px;top:548.17px;font-size:7.38px;color:#dde2e7;font-family:'Liberation Mono', monospace;letter-spacing:0.014px;transform:scaleY(1.2);transform-origin:0 4.83px;">nager@aac039, collectionName=metric_aggregation}</div>
<div class="t" id="t143" style="left:790.00px;top:562.00px;font-size:8.7px;color:#818d99;letter-spacing:-0.144px;">host =</div>
<div class="t" id="t144" style="left:817.00px;top:562.00px;font-size:8.7px;color:#eef1f4;letter-spacing:-0.093px;">w01-md-w01-7bzqf-qhv8z</div>
<div class="t" id="t145" style="left:929.50px;top:562.00px;font-size:8.7px;color:#818d99;letter-spacing:0.020px;">source =</div>
<div class="t" id="t146" style="left:966.20px;top:562.00px;font-size:8.7px;color:#eef1f4;letter-spacing:0.065px;">/var/log/containers/event-consumer-9cc9cc7f7-m9g4v_dev-b2_event-consumer...</div>
<div class="t" id="t147" style="left:1298.20px;top:562.00px;font-size:8.7px;color:#818d99;letter-spacing:0.056px;">sourcetype =</div>
<div class="t" id="t148" style="left:1352.00px;top:562.00px;font-size:8.7px;color:#eef1f4;letter-spacing:0.044px;">kube:container:event-consumer-container</div>
<div class="t" id="t149" style="left:712.50px;top:582.01px;font-size:8.7px;color:#dfe4e9;letter-spacing:0.350px;">3/20/25</div>
<div class="t" id="t150" style="left:712.50px;top:595.00px;font-size:8.7px;color:#dfe4e9;letter-spacing:-0.285px;">2:03:00.113 PM</div>
<div class="t" id="t151" style="left:790.00px;top:584.15px;font-size:7.38px;color:#dde2e7;font-family:'Liberation Mono', monospace;letter-spacing:0.013px;transform:scaleY(1.2);transform-origin:0 4.85px;">2025-03-20 14:03:00,112 [pool-8-thread-5] ERROR com.opscruise.event.consumer.EventConsumer - Running the job for {CONFIG_MANAGER=com.opscruise.config.manager.Config</div>
<div class="t" id="t152" style="left:790.00px;top:597.16px;font-size:7.38px;color:#dde2e7;font-family:'Liberation Mono', monospace;letter-spacing:0.013px;transform:scaleY(1.2);transform-origin:0 4.84px;">Manager@24844968, GraphProcessor=com.opscruise.graphdb.helper.basic.DBManager@11a0144c, name=MetricAggregationConfiguration, dbManager=com.opscruise.db.manager.DBMa</div>
<div class="t" id="t153" style="left:790.00px;top:609.06px;font-size:7.38px;color:#dde2e7;font-family:'Liberation Mono', monospace;letter-spacing:0.014px;transform:scaleY(1.2);transform-origin:0 4.94px;">nager@aac039, collectionName=metric_aggregation}</div>
<div class="t" id="t154" style="left:790.00px;top:623.00px;font-size:8.7px;color:#818d99;letter-spacing:-0.144px;">host =</div>
<div class="t" id="t155" style="left:817.00px;top:623.00px;font-size:8.7px;color:#eef1f4;letter-spacing:-0.093px;">w01-md-w01-7bzqf-qhv8z</div>
<div class="t" id="t156" style="left:929.50px;top:623.00px;font-size:8.7px;color:#818d99;letter-spacing:0.020px;">source =</div>
<div class="t" id="t157" style="left:966.20px;top:623.00px;font-size:8.7px;color:#eef1f4;letter-spacing:0.065px;">/var/log/containers/event-consumer-9cc9cc7f7-m9g4v_dev-b2_event-consumer...</div>
<div class="t" id="t158" style="left:1298.20px;top:623.00px;font-size:8.7px;color:#818d99;letter-spacing:0.056px;">sourcetype =</div>
<div class="t" id="t159" style="left:1352.00px;top:623.00px;font-size:8.7px;color:#eef1f4;letter-spacing:0.044px;">kube:container:event-consumer-container</div>
<div class="t" id="t160" style="left:712.50px;top:644.00px;font-size:8.7px;color:#dfe4e9;letter-spacing:0.350px;">3/20/25</div>
<div class="t" id="t161" style="left:712.50px;top:656.00px;font-size:8.7px;color:#dfe4e9;letter-spacing:-0.080px;">1:58:00.065 PM</div>
<div class="t" id="t162" style="left:790.00px;top:646.24px;font-size:7.38px;color:#dde2e7;font-family:'Liberation Mono', monospace;letter-spacing:0.013px;transform:scaleY(1.2);transform-origin:0 4.76px;">2025-03-20 13:58:00,065 [pool-8-thread-4] ERROR com.opscruise.event.consumer.EventConsumer - Running the job for {CONFIG_MANAGER=com.opscruise.config.manager.Config</div>
<div class="t" id="t163" style="left:790.00px;top:658.05px;font-size:7.38px;color:#dde2e7;font-family:'Liberation Mono', monospace;letter-spacing:0.013px;transform:scaleY(1.2);transform-origin:0 4.95px;">Manager@24844968, GraphProcessor=com.opscruise.graphdb.helper.basic.DBManager@11a0144c, name=MetricAggregationConfiguration, dbManager=com.opscruise.db.manager.DBMa</div>
<div class="t" id="t164" style="left:790.00px;top:671.15px;font-size:7.38px;color:#dde2e7;font-family:'Liberation Mono', monospace;letter-spacing:0.014px;transform:scaleY(1.2);transform-origin:0 4.85px;">nager@aac039, collectionName=metric_aggregation}</div>
<div class="t" id="t165" style="left:790.00px;top:685.00px;font-size:8.7px;color:#818d99;letter-spacing:-0.144px;">host =</div>
<div class="t" id="t166" style="left:817.00px;top:685.00px;font-size:8.7px;color:#eef1f4;letter-spacing:-0.093px;">w01-md-w01-7bzqf-qhv8z</div>
<div class="t" id="t167" style="left:929.50px;top:685.00px;font-size:8.7px;color:#818d99;letter-spacing:0.020px;">source =</div>
<div class="t" id="t168" style="left:966.20px;top:685.00px;font-size:8.7px;color:#eef1f4;letter-spacing:0.065px;">/var/log/containers/event-consumer-9cc9cc7f7-m9g4v_dev-b2_event-consumer...</div>
<div class="t" id="t169" style="left:1298.20px;top:685.00px;font-size:8.7px;color:#818d99;letter-spacing:0.056px;">sourcetype =</div>
<div class="t" id="t170" style="left:1352.00px;top:685.00px;font-size:8.7px;color:#eef1f4;letter-spacing:0.044px;">kube:container:event-consumer-container</div>
</body></html>
